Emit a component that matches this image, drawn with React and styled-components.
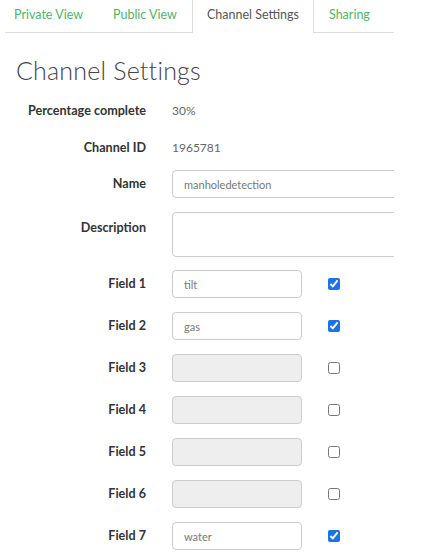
import React from "react";
import styled, { createGlobalStyle } from "styled-components";

const Global = createGlobalStyle`
  html, body { margin: 0; padding: 0; background: #fff; }
  body { font-family: "Lato", "Liberation Sans", sans-serif; }
`;

const Page = styled.div`
  width: 394px;
  height: 560px;
  overflow: hidden;
  background: #fff;
`;

const TabBar = styled.ul`
  display: flex;
  align-items: flex-start;
  list-style: none;
  margin: 0 0 0 5px;
  padding: 0;
  height: 32px;
  border-bottom: 1px solid #dddddd;
`;

const Tab = styled.li`
  height: ${(p) => (p.$active ? 33 : 32)}px;
  box-sizing: border-box;
  padding: 0 14px 4px ${(p) => (p.$first ? "8px" : "14px")};
  display: flex;
  align-items: center;
  font-size: 12.5px;
  color: ${(p) => (p.$active ? "#555555" : "#4fb36a")};
  background: ${(p) => (p.$active ? "#fff" : "transparent")};
  border-left: 1px solid ${(p) => (p.$active ? "#dddddd" : "transparent")};
  border-right: 1px solid ${(p) => (p.$active ? "#dddddd" : "transparent")};
  white-space: nowrap;
`;

const Heading = styled.h1`
  margin: 22px 0 0 16px;
  font-weight: 300;
  font-size: 25px;
  line-height: 30px;
  color: #444;
  letter-spacing: 0.2px;
`;

const Form = styled.div`
  display: flex;
  flex-direction: column;
  gap: 14px;
  margin-top: 11px;
`;

const Row = styled.div`
  display: flex;
  align-items: ${(p) => (p.$top ? "flex-start" : "center")};
  height: ${(p) => p.$h || 28}px;
`;

const Label = styled.div`
  width: 146px;
  flex: none;
  text-align: right;
  font-weight: 700;
  font-size: 12.6px;
  line-height: 16px;
  color: #333;
  padding-top: ${(p) => (p.$top ? "8px" : "0")};
  margin-right: 26px;
  white-space: nowrap;
`;

const Value = styled.div`
  font-size: 12px;
  line-height: 16px;
  color: #666;
`;

const TextInput = styled.input`
  flex: none;
  box-sizing: border-box;
  width: ${(p) => p.$w || 130}px;
  height: 28px;
  border: 1px solid #cccccc;
  border-radius: 4px;
  padding: 0 11px;
  font-family: "Lato", "Liberation Sans", sans-serif;
  font-size: 11px;
  color: #777;
  background: ${(p) => (p.disabled ? "#eeeeee" : "#fff")};
  outline: none;
`;

const TextArea = styled.textarea`
  flex: none;
  box-sizing: border-box;
  width: 260px;
  height: 45px;
  border: 1px solid #cccccc;
  border-radius: 4px;
  resize: none;
  background: #fff;
  outline: none;
`;

const Check = styled.input`
  width: 12px;
  height: 12px;
  margin: 0 0 0 26px;
  accent-color: #1a73e8;
`;

const fields = [
  { n: 1, v: "tilt", on: true },
  { n: 2, v: "gas", on: true },
  { n: 3, v: "", on: false },
  { n: 4, v: "", on: false },
  { n: 5, v: "", on: false },
  { n: 6, v: "", on: false },
  { n: 7, v: "water", on: true },
];

export default function App() {
  return (
    <Page>
      <Global />
      <TabBar>
        <Tab $first>Private View</Tab>
        <Tab>Public View</Tab>
        <Tab $active>Channel Settings</Tab>
        <Tab>Sharing</Tab>
      </TabBar>
      <Heading>Channel Settings</Heading>
      <Form>
        <Row $h={30}>
          <Label>Percentage complete</Label>
          <Value>30%</Value>
        </Row>
        <Row $h={16}>
          <Label>Channel ID</Label>
          <Value>1965781</Value>
        </Row>
        <Row>
          <Label>Name</Label>
          <TextInput $w={260} readOnly value="manholedetection" />
        </Row>
        <Row $h={44} $top>
          <Label $top>Description</Label>
          <TextArea readOnly value="" />
        </Row>
        {fields.map((f) => (
          <Row key={f.n}>
            <Label>Field {f.n}</Label>
            <TextInput readOnly value={f.v} disabled={!f.on} />
            <Check type="checkbox" readOnly checked={f.on} />
          </Row>
        ))}
      </Form>
    </Page>
  );
}
